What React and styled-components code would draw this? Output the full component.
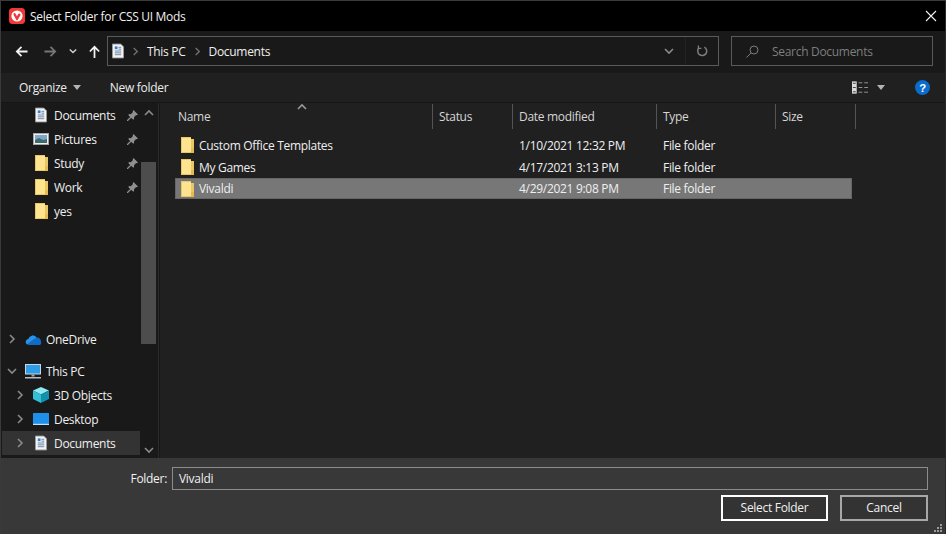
import React from 'react';
import styled, { createGlobalStyle } from 'styled-components';

const GlobalStyle = createGlobalStyle`
  html, body { margin: 0; padding: 0; background: #383838; }
  body { font-family: "Open Sans", "Noto Sans", "Liberation Sans", sans-serif; font-size: 12px; color: #f2f2f2; letter-spacing: -0.3px; }
  * { box-sizing: border-box; }
  svg { flex: none; }
`;

const Window = styled.div`
  width: 946px;
  height: 534px;
  display: flex;
  flex-direction: column;
  overflow: hidden;
  border-top: 1px solid #3a3a3a;
  border-left: 1px solid #3a3a3a;
  border-right: 1px solid #2a2a2a;
  background: #383838;
`;

const TitleBar = styled.div`
  height: 30px;
  flex: none;
  background: #000;
  display: flex;
  align-items: center;
  padding: 0 8px;
  gap: 5px;
`;

const Title = styled.div`
  flex: 1;
  color: #f0f0f0;
`;

const NavBar = styled.div`
  height: 42px;
  flex: none;
  background: #191919;
  display: flex;
  align-items: center;
  padding: 0 12px 2px 0;
`;

const NavButtons = styled.div`
  width: 106px;
  flex: none;
  display: flex;
  align-items: center;
  height: 100%;
  padding-left: 11px;
`;

const NavSlot = styled.div`
  width: ${(p) => p.$w}px;
  margin-left: ${(p) => p.$ml || 0}px;
  display: flex;
  justify-content: center;
  align-items: center;
`;

const AddressBox = styled.div`
  width: 612px;
  height: 30px;
  flex: none;
  border: 1px solid #5a5a5a;
  display: flex;
  align-items: center;
  padding-left: 4px;
`;

const Crumb = styled.span`
  color: #f0f0f0;
`;

const CrumbSep = styled.span`
  display: inline-flex;
  width: 23px;
  justify-content: center;
`;

const AddressSpacer = styled.div`
  flex: 1;
`;

const AddressDrop = styled.div`
  width: 33px;
  height: 100%;
  display: flex;
  align-items: center;
  justify-content: center;
  border-right: 1px solid #222;
`;

const AddressRefresh = styled.div`
  width: 32px;
  height: 100%;
  display: flex;
  align-items: center;
  justify-content: center;
`;

const SearchBox = styled.div`
  margin-left: 12px;
  width: 203px;
  height: 30px;
  border: 1px solid #5a5a5a;
  display: flex;
  align-items: center;
  padding-left: 14px;
  gap: 13px;
  color: #7e7e7e;
`;

const ToolBar = styled.div`
  height: 30px;
  flex: none;
  background: #202020;
  display: flex;
  align-items: center;
  padding: 0 15px 0 18px;
  border-bottom: 1px solid #161616;
`;

const ToolLabel = styled.span`
  color: #ececec;
`;

const Caret = styled.span`
  display: inline-block;
  width: 0;
  height: 0;
  border-left: 4px solid transparent;
  border-right: 4px solid transparent;
  border-top: 5px solid #b4b4b4;
  margin-left: ${(p) => p.$ml || 0}px;
  margin-right: ${(p) => p.$mr || 0}px;
`;

const ToolSpacer = styled.div`
  flex: 1;
`;

const Middle = styled.div`
  flex: 1;
  min-height: 0;
  display: flex;
`;

const Sidebar = styled.div`
  width: 158px;
  flex: none;
  background: #191919;
  display: flex;
  border-right: 1px solid #2c2c2c;
`;

const NavList = styled.div`
  width: 139px;
  flex: none;
  padding-left: 1px;
`;

const NavRow = styled.div`
  height: 24px;
  display: flex;
  align-items: center;
  padding-left: ${(p) => p.$level * 8 + 3}px;
  padding-right: 2px;
  margin-top: ${(p) => p.$mt || 0}px;
  background: ${(p) => (p.$active ? '#333333' : 'transparent')};
`;

const Chevron = styled.span`
  width: 14px;
  flex: none;
  display: flex;
  justify-content: center;
`;

const RowIcon = styled.span`
  width: 18px;
  height: 18px;
  flex: none;
  margin-left: 5px;
  margin-right: 4px;
  display: flex;
  align-items: center;
  justify-content: center;
`;

const RowLabel = styled.span`
  flex: 1;
  color: #efefef;
  white-space: nowrap;
`;

const ScrollBar = styled.div`
  width: 15px;
  flex: none;
  margin-left: 1px;
  display: flex;
  flex-direction: column;
  align-items: center;
`;

const ScrollArrow = styled.div`
  height: 20px;
  flex: none;
  display: flex;
  align-items: center;
  justify-content: center;
  padding-top: ${(p) => p.$pt || 0}px;
`;

const ScrollTrack = styled.div`
  flex: 1;
  width: 100%;
  padding: 39px 0 94px;
  display: flex;
`;

const ScrollThumb = styled.div`
  flex: 1;
  background: #4d4d4d;
`;

const Files = styled.div`
  flex: 1;
  min-width: 0;
  background: #202020;
  padding-left: 15px;
  border-left: 1px solid #161616;
`;

const HeaderRow = styled.div`
  display: grid;
  grid-template-columns: 258px 80px 144px 119px 80px;
  height: 26px;
  padding-top: 1px;
  position: relative;
  color: #d6d6d6;
`;

const HeaderCell = styled.div`
  display: flex;
  align-items: center;
  padding-left: ${(p) => p.$pl || 6}px;
  border-right: 1px solid #545454;
`;

const SortMark = styled.span`
  position: absolute;
  left: 122px;
  top: -1px;
  display: flex;
`;

const FileRows = styled.div`
  padding-top: 5px;
  width: 677px;
`;

const FileRow = styled.div`
  display: grid;
  grid-template-columns: 258px 80px 144px 195px;
  height: ${(p) => (p.$selected ? 21 : 22)}px;
  align-items: center;
  background: ${(p) => (p.$selected ? '#777777' : 'transparent')};
  border: 1px solid ${(p) => (p.$selected ? '#666666' : 'transparent')};
  color: #efefef;
`;

const NameCell = styled.div`
  display: flex;
  align-items: center;
  gap: 5px;
  padding-left: 5px;
`;

const FileCell = styled.div`
  padding-left: 5px;
`;

const Footer = styled.div`
  flex: none;
  height: 76px;
  background: #383838;
  display: grid;
  grid-template-columns: 162px 1fr;
  grid-template-rows: 23px auto;
  row-gap: 5px;
  padding: 9px 17px 0 4px;
  position: relative;
`;

const FolderLabel = styled.label`
  display: flex;
  justify-content: flex-end;
  align-items: center;
  color: #f0f0f0;
`;

const FolderInput = styled.div`
  margin-left: 5px;
  border: 1px solid #8c8c8c;
  padding-left: 6px;
  display: flex;
  align-items: center;
  color: #efefef;
`;

const ButtonRow = styled.div`
  grid-column: 1 / 3;
  display: flex;
  justify-content: flex-end;
  gap: 12px;
`;

const Button = styled.button`
  height: 26px;
  width: ${(p) => p.$w}px;
  background: #333333;
  border: 2px solid ${(p) => (p.$primary ? '#ffffff' : '#a8a8a8')};
  border-radius: 0;
  color: #f0f0f0;
  font: inherit;
  letter-spacing: inherit;
  padding: 0 0 2px;
`;

const Grip = styled.span`
  position: absolute;
  right: 2px;
  bottom: 1px;
  display: flex;
`;

const Chev = ({ dir = 'right', color = '#8a8a8a', size = 10, w = 1.6 }) => {
  const d = {
    right: 'M3 1l4 4-4 4',
    down: 'M1 3l4 4 4-4',
    up: 'M1 7l4-4 4 4',
  }[dir];
  return (
    <svg width={size} height={size} viewBox="0 0 10 10" fill="none">
      <path d={d} stroke={color} strokeWidth={w} />
    </svg>
  );
};

const Arrow = ({ dir, color }) => (
  <svg width="13" height="13" viewBox="0 0 14 14" fill="none" stroke={color} strokeWidth="1.9">
    {dir === 'left' && <path d="M13.500 7H2M7 2L2 7l5 5" />}
    {dir === 'right' && <path d="M.5 7H12M7 2l5 5-5 5" />}
    {dir === 'up' && <path d="M7 14V2M2 7l5-5 5 5" />}
  </svg>
);

const VivaldiLogo = () => (
  <svg width="16" height="16" viewBox="0 0 16 16">
    <rect width="16" height="16" rx="3.5" fill="#ef3939" />
    <circle cx="8" cy="8" r="5.6" fill="#fff" />
    <path d="M4.6 5.6c.7-.9 1.7-.5 2.1.3L8 8.300l1.200-2.200c.5-.9 2.300-.9 2.300.6 0 .3-.1.5-.2.700L8.800 11.700c-.4.700-1.200.700-1.600 0L4.700 7.300c-.3-.6-.3-1.200-.1-1.700z" fill="#ef3939" />
  </svg>
);

const CloseIcon = () => (
  <svg width="12" height="12" viewBox="0 0 12 12" stroke="#f2f2f2" strokeWidth="1.1">
    <path d="M1 1l10 10M11 1L1 11" />
  </svg>
);

const RefreshIcon = () => (
  <svg width="12" height="12" viewBox="0 0 12 12" fill="none" stroke="#7e7e7e" strokeWidth="1.5">
    <path d="M3.400 2.600A4.500 4.500 0 1 0 9 2.600" transform="rotate(-10 6 6)" />
    <path d="M2.400 .4v3h3" strokeWidth="1.300" />
  </svg>
);

const SearchIcon = () => (
  <svg width="13" height="13" viewBox="0 0 13 13" fill="none" stroke="#7a7a7a" strokeWidth="1">
    <circle cx="8" cy="5" r="4" />
    <path d="M5 8l-4.500 4.500" />
  </svg>
);

const DocIcon = () => (
  <svg width="12" height="16" viewBox="0 0 13 16">
    <path d="M.5.5h9l3 3v12H.5z" fill="#f4f4f4" stroke="#9a9a9a" />
    <path d="M3 3h3v3H3z" fill="#2f7fd6" />
    <path d="M7 4h3M7 6h3M3 8h7M3 10h7M3 12h7" stroke="#5f7f9f" strokeWidth="1" />
  </svg>
);

const PictureIcon = () => (
  <svg width="16" height="12" viewBox="0 0 16 12">
    <rect x=".5" y=".5" width="15" height="11" fill="#eef0f2" stroke="#a5a5a5" />
    <rect x="2" y="2" width="12" height="8" fill="#7fa6c9" />
    <path d="M2 7l4-2 4 2 4-1v4H2z" fill="#3d6d6a" />
  </svg>
);

const FolderIcon = () => (
  <svg width="13" height="16" viewBox="0 0 13 16">
    <path d="M0 0h10v2h3v14H0z" fill="#e9c765" />
    <path d="M1 1h9v10h2v4H1z" fill="#fee48f" />
    <path d="M10 11h3v5h-3z" fill="#e5bb4f" />
  </svg>
);

const PinIcon = () => (
  <svg width="11" height="11" viewBox="0 0 11 11" fill="#8f8f8f">
    <path d="M6.500 0L11 4.500l-1 .8-.8-.3-2.200 2.200.2 1.600-1 1-2-2L1 11l-1 0 0-.9 3.200-3.100-2-2 1-1 1.600.2L6 2l-.3-.9z" />
  </svg>
);

const CloudIcon = () => (
  <svg width="17" height="11" viewBox="0 0 17 11">
    <path d="M4 11a3 3 0 0 1-.6-5.900A4.500 4.500 0 0 1 11.500 3.500 3.800 3.800 0 0 1 16 7.500c.8 1.500 0 3.500-1.800 3.500z" fill="#0f6cc6" />
    <path d="M2 10.500c-2-1.500-1.500-4.800 1.400-5.400a4.500 4.500 0 0 1 8.100-1.600L7 6.500z" fill="#2c92e6" />
  </svg>
);

const PcIcon = () => (
  <svg width="16" height="15" viewBox="0 0 16 15">
    <rect y="0" width="16" height="10.500" fill="#c9d6df" />
    <rect x="1" y="1" width="14" height="8.500" fill="#2e9de8" />
    <rect x="6.500" y="10.500" width="3" height="2" fill="#9aa5ad" />
    <rect x="0" y="13" width="16" height="1.500" fill="#b5bec5" />
  </svg>
);

const CubeIcon = () => (
  <svg width="16" height="16" viewBox="0 0 16 16">
    <path d="M8 0l8 3.500-8 4-8-4z" fill="#8fe8f2" />
    <path d="M0 3.500l8 4V16L0 12z" fill="#35bfd6" />
    <path d="M16 3.500l-8 4V16l8-4z" fill="#1191ab" />
  </svg>
);

const DesktopIcon = () => (
  <svg width="16" height="12" viewBox="0 0 16 12">
    <rect width="16" height="12" fill="#1e90ea" rx=".5" />
    <rect y="10.800" width="16" height="1.200" fill="#bfe0f6" />
  </svg>
);

const ViewsIcon = () => (
  <svg width="16" height="13" viewBox="0 0 17 13">
    <rect width="5" height="13" fill="#dcdcdc" />
    <path d="M1 1.500h3v1H1zM1 6h3v1H1zM1 10.500h3v1H1z" fill="#444" />
    <path d="M7 1.500h4M13 1.500h4M7 6.500h4M13 6.500h4M7 11.500h4M13 11.500h4" stroke="#9a9a9a" />
  </svg>
);

const HelpIcon = () => (
  <svg width="15" height="15" viewBox="0 0 16 16">
    <circle cx="8" cy="8" r="8" fill="#0a6ccc" />
    <text x="8" y="12.300" textAnchor="middle" fontSize="12" fontWeight="700" fill="#fff" fontFamily="Liberation Sans, sans-serif">?</text>
  </svg>
);

const GripIcon = () => (
  <svg width="9" height="9" viewBox="0 0 9 9" fill="#9a9a9a">
    <path d="M6 0h2v2H6zM3 3h2v2H3zM6 3h2v2H6zM0 6h2v2H0zM3 6h2v2H3zM6 6h2v2H6z" />
  </svg>
);

const pinned = [
  { label: 'Documents', icon: <DocIcon />, pin: true },
  { label: 'Pictures', icon: <PictureIcon />, pin: true },
  { label: 'Study', icon: <FolderIcon />, pin: true },
  { label: 'Work', icon: <FolderIcon />, pin: true },
  { label: 'yes', icon: <FolderIcon /> },
];

const tree = [
  { label: 'OneDrive', icon: <CloudIcon />, level: 0, mt: 104, chev: 'right' },
  { label: 'This PC', icon: <PcIcon />, level: 0, mt: 8, chev: 'down' },
  { label: '3D Objects', icon: <CubeIcon />, level: 1, chev: 'right' },
  { label: 'Desktop', icon: <DesktopIcon />, level: 1, chev: 'right' },
  { label: 'Documents', icon: <DocIcon />, level: 1, chev: 'right', active: true },
];

const files = [
  { name: 'Custom Office Templates', date: '1/10/2021 12:32 PM' },
  { name: 'My Games', date: '4/17/2021 3:13 PM' },
  { name: 'Vivaldi', date: '4/29/2021 9:08 PM', selected: true },
];

export default function App() {
  return (
    <Window>
      <GlobalStyle />
      <TitleBar>
        <VivaldiLogo />
        <Title>Select Folder for CSS UI Mods</Title>
        <CloseIcon />
      </TitleBar>
      <NavBar>
        <NavButtons>
          <NavSlot $w={18}><Arrow dir="left" color="#f2f2f2" /></NavSlot>
          <NavSlot $w={40}><Arrow dir="right" color="#777" /></NavSlot>
          <NavSlot $w={6}><Chev dir="down" color="#d0d0d0" size={8} w={1.8} /></NavSlot>
          <NavSlot $w={20} $ml={8}><Arrow dir="up" color="#f2f2f2" /></NavSlot>
        </NavButtons>
        <AddressBox>
          <DocIcon />
          <CrumbSep><Chev color="#6f6f6f" size={9} /></CrumbSep>
          <Crumb>This PC</Crumb>
          <CrumbSep><Chev color="#6f6f6f" size={9} /></CrumbSep>
          <Crumb>Documents</Crumb>
          <AddressSpacer />
          <AddressDrop><Chev dir="down" color="#8a8a8a" /></AddressDrop>
          <AddressRefresh><RefreshIcon /></AddressRefresh>
        </AddressBox>
        <SearchBox>
          <SearchIcon />
          Search Documents
        </SearchBox>
      </NavBar>
      <ToolBar>
        <ToolLabel>Organize</ToolLabel>
        <Caret $ml={6} $mr={29} />
        <ToolLabel>New folder</ToolLabel>
        <ToolSpacer />
        <ViewsIcon />
        <Caret $ml={9} $mr={30} />
        <HelpIcon />
      </ToolBar>
      <Middle>
        <Sidebar>
          <NavList>
            {pinned.map((r) => (
              <NavRow key={r.label} $level={1}>
                <Chevron />
                <RowIcon>{r.icon}</RowIcon>
                <RowLabel>{r.label}</RowLabel>
                {r.pin && <PinIcon />}
              </NavRow>
            ))}
            {tree.map((r) => (
              <NavRow key={r.label} $level={r.level} $mt={r.mt} $active={r.active}>
                <Chevron><Chev dir={r.chev} /></Chevron>
                <RowIcon>{r.icon}</RowIcon>
                <RowLabel>{r.label}</RowLabel>
              </NavRow>
            ))}
          </NavList>
          <ScrollBar>
            <ScrollArrow><Chev dir="up" /></ScrollArrow>
            <ScrollTrack><ScrollThumb /></ScrollTrack>
            <ScrollArrow $pt={4}><Chev dir="down" /></ScrollArrow>
          </ScrollBar>
        </Sidebar>
        <Files>
          <HeaderRow>
            <HeaderCell $pl={3}>Name</HeaderCell>
            <HeaderCell>Status</HeaderCell>
            <HeaderCell>Date modified</HeaderCell>
            <HeaderCell>Type</HeaderCell>
            <HeaderCell>Size</HeaderCell>
            <SortMark><Chev dir="up" color="#9a9a9a" /></SortMark>
          </HeaderRow>
          <FileRows>
            {files.map((f) => (
              <FileRow key={f.name} $selected={f.selected}>
                <NameCell><FolderIcon />{f.name}</NameCell>
                <span />
                <FileCell>{f.date}</FileCell>
                <FileCell>File folder</FileCell>
              </FileRow>
            ))}
          </FileRows>
        </Files>
      </Middle>
      <Footer>
        <FolderLabel>Folder:</FolderLabel>
        <FolderInput>Vivaldi</FolderInput>
        <ButtonRow>
          <Button $primary $w={107}>Select Folder</Button>
          <Button $w={88}>Cancel</Button>
        </ButtonRow>
        <Grip><GripIcon /></Grip>
      </Footer>
    </Window>
  );
}
